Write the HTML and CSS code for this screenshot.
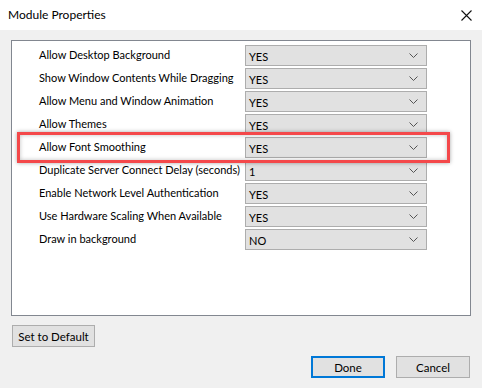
FILE: index.html
```html
<!DOCTYPE html>
<html>
<head>
<meta charset="utf-8">
<link rel="stylesheet" href="styles.css">
</head>
<body>
<div class="window">
  <div class="titlebar">
    <span class="title">Module Properties</span>
    <svg class="close" width="11" height="11" viewBox="0 0 11 11"><path d="M0.5 0.5 L10.5 10.5 M10.5 0.5 L0.5 10.5" stroke="#111" stroke-width="1.1" fill="none"/></svg>
  </div>
  <div class="content">
    <div class="panel">
      <div class="row"><span class="label">Allow Desktop Background</span><div class="combo"><span>YES</span><svg class="chev" width="9" height="5" viewBox="0 0 9 5"><path d="M0.5 0.5 L4.5 4.5 L8.5 0.5" stroke="#555" fill="none"/></svg></div></div>
      <div class="row"><span class="label">Show Window Contents While Dragging</span><div class="combo"><span>YES</span><svg class="chev" width="9" height="5" viewBox="0 0 9 5"><path d="M0.5 0.5 L4.5 4.5 L8.5 0.5" stroke="#555" fill="none"/></svg></div></div>
      <div class="row"><span class="label">Allow Menu and Window Animation</span><div class="combo"><span>YES</span><svg class="chev" width="9" height="5" viewBox="0 0 9 5"><path d="M0.5 0.5 L4.5 4.5 L8.5 0.5" stroke="#555" fill="none"/></svg></div></div>
      <div class="row"><span class="label">Allow Themes</span><div class="combo"><span>YES</span><svg class="chev" width="9" height="5" viewBox="0 0 9 5"><path d="M0.5 0.5 L4.5 4.5 L8.5 0.5" stroke="#555" fill="none"/></svg></div></div>
      <div class="row"><span class="label">Allow Font Smoothing</span><div class="combo"><span>YES</span><svg class="chev" width="9" height="5" viewBox="0 0 9 5"><path d="M0.5 0.5 L4.5 4.5 L8.5 0.5" stroke="#555" fill="none"/></svg></div></div>
      <div class="row"><span class="label">Duplicate Server Connect Delay (seconds)</span><div class="combo"><span>1</span><svg class="chev" width="9" height="5" viewBox="0 0 9 5"><path d="M0.5 0.5 L4.5 4.5 L8.5 0.5" stroke="#555" fill="none"/></svg></div></div>
      <div class="row"><span class="label">Enable Network Level Authentication</span><div class="combo"><span>YES</span><svg class="chev" width="9" height="5" viewBox="0 0 9 5"><path d="M0.5 0.5 L4.5 4.5 L8.5 0.5" stroke="#555" fill="none"/></svg></div></div>
      <div class="row"><span class="label">Use Hardware Scaling When Available</span><div class="combo"><span>YES</span><svg class="chev" width="9" height="5" viewBox="0 0 9 5"><path d="M0.5 0.5 L4.5 4.5 L8.5 0.5" stroke="#555" fill="none"/></svg></div></div>
      <div class="row"><span class="label">Draw in background</span><div class="combo"><span>NO</span><svg class="chev" width="9" height="5" viewBox="0 0 9 5"><path d="M0.5 0.5 L4.5 4.5 L8.5 0.5" stroke="#555" fill="none"/></svg></div></div>
      <div class="highlight"></div>
    </div>
    <div class="left-actions">
      <button class="btn default-btn">Set to Default</button>
    </div>
    <div class="actions">
      <button class="btn primary">Done</button>
      <button class="btn">Cancel</button>
    </div>
  </div>
</div>
</body>
</html>
```
FILE: styles.css
```css
html, body {
  margin: 0;
  padding: 0;
}
body {
  width: 482px;
  height: 388px;
  overflow: hidden;
  font-family: Lato, "Liberation Sans", sans-serif;
  font-size: 11px;
  color: #000;
  background: #f0f0f0;
}
.window {
  width: 482px;
  height: 388px;
  display: flex;
  flex-direction: column;
}
.titlebar {
  height: 30px;
  background: #fff;
  display: flex;
  align-items: center;
  justify-content: space-between;
  padding: 0 10px 0 8px;
  box-sizing: border-box;
}
.title {
  font-size: 12px;
  padding-bottom: 1px;
}
.close {
  display: block;
}
.content {
  flex: 1;
  display: flex;
  flex-direction: column;
  padding: 10px 11px 0 11px;
}
.panel {
  position: relative;
  height: 270px;
  background: #fff;
  border: 1px solid #828790;
  padding: 4px 0 0 27px;
  display: flex;
  flex-direction: column;
  gap: 2px;
}
.row {
  display: flex;
  align-items: center;
  height: 21px;
}
.label {
  width: 206px;
  white-space: nowrap;
  margin-top: -2px;
}
.combo {
  width: 169px;
  height: 19px;
  border: 1px solid #adadad;
  background: #e1e1e1;
  display: flex;
  align-items: center;
  justify-content: space-between;
  padding: 0 8px 0 3px;
}
.combo span {
  margin-top: 1px;
}
.chev {
  display: block;
}
.highlight {
  position: absolute;
  left: 5px;
  top: 91px;
  width: 427px;
  height: 25px;
  border: 3px solid #f4484a;
  box-shadow: 0 0 4px rgba(0,0,0,0.35), inset 0 0 4px rgba(0,0,0,0.25);
  pointer-events: none;
}
.left-actions {
  margin-top: 9px;
  display: flex;
}
.btn {
  font-family: inherit;
  font-size: 11.5px;
  background: #e1e1e1;
  border: 1px solid #adadad;
  height: 22px;
  padding: 0;
  margin: 0;
  color: #000;
  box-sizing: border-box;
}
.default-btn {
  width: 83px;
  margin-left: 1px;
}
.actions {
  margin-top: 9px;
  display: flex;
  justify-content: flex-end;
  gap: 11px;
  padding-right: 1px;
}
.actions .btn {
  width: 74px;
}
.btn.primary {
  border: 2px solid #0078d7;
}
```
